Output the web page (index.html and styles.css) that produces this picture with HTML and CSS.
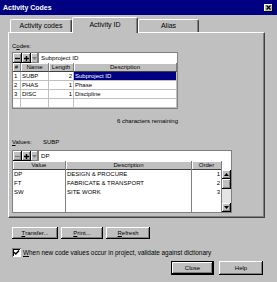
FILE: index.html
```html
<!DOCTYPE html>
<html>
<head>
<meta charset="utf-8">
<title>Activity Codes</title>
<link rel="stylesheet" href="styles.css">
</head>
<body>
<div class="window">
  <div class="titlebar">
    <span class="title">Activity Codes</span>
    <span class="xbtn"><svg width="5" height="5" viewBox="0 0 5 5"><path d="M0.5 0.5L4.5 4.5M4.5 0.5L0.5 4.5" stroke="#000" stroke-width="1.2"/></svg></span>
  </div>
  <div class="client">
    <div class="tabs">
      <div class="tab t1">Activity codes</div>
      <div class="tab t2 active">Activity ID</div>
      <div class="tab t3">Alias</div>
    </div>
    <div class="panel">
      <div class="label">C<u>o</u>des:</div>
      <div class="grid codes">
        <div class="toolbar">
          <span class="tbtn"><svg width="5" height="5" viewBox="0 0 5 5"><path d="M0 2.5H5" stroke="#000" stroke-width="1.4"/></svg></span>
          <span class="tbtn"><svg width="5" height="5" viewBox="0 0 5 5"><path d="M0 2.5H5M2.5 0V5" stroke="#000" stroke-width="1.4"/></svg></span>
          <span class="drop"><svg width="5" height="3" viewBox="0 0 5 3"><path d="M0 0H5L2.5 3Z" fill="#808080"/></svg></span>
          <span class="field">Subproject ID</span>
        </div>
        <div class="crow head"><span>#</span><span>Name</span><span>Length</span><span>Description</span></div>
        <div class="crow first"><span>1</span><span>SUBP</span><span class="num">2</span><span class="sel">Subproject ID</span></div>
        <div class="crow"><span>2</span><span>PHAS</span><span class="num">1</span><span>Phase</span></div>
        <div class="crow"><span>3</span><span>DISC</span><span class="num">1</span><span>Discipline</span></div>
        <div class="crow"><span></span><span></span><span></span><span></span></div>
      </div>
      <div class="remaining">6 characters remaining</div>
      <div class="label vlabel"><span class="vl"><u>V</u>alues:</span><span>SUBP</span></div>
      <div class="grid values">
        <div class="toolbar">
          <span class="tbtn"><svg width="5" height="5" viewBox="0 0 5 5"><path d="M0 2.5H5" stroke="#808080" stroke-width="1.4"/></svg></span>
          <span class="tbtn"><svg width="5" height="5" viewBox="0 0 5 5"><path d="M0 2.5H5M2.5 0V5" stroke="#000" stroke-width="1.4"/></svg></span>
          <span class="drop"><svg width="5" height="3" viewBox="0 0 5 3"><path d="M0 0H5L2.5 3Z" fill="#808080"/></svg></span>
          <span class="field">DP</span>
        </div>
        <div class="vbody">
          <div class="vcol c-val">
            <div class="vh">Value</div>
            <div class="vc">DP</div>
            <div class="vc">FT</div>
            <div class="vc">SW</div>
          </div>
          <div class="vcol c-desc">
            <div class="vh">Description</div>
            <div class="vc">DESIGN &amp; PROCURE</div>
            <div class="vc">FABRICATE &amp; TRANSPORT</div>
            <div class="vc">SITE WORK</div>
          </div>
          <div class="vcol c-ord">
            <div class="vh">Order</div>
            <div class="vc">1</div>
            <div class="vc">2</div>
            <div class="vc">3</div>
          </div>
          <div class="vcol c-scroll">
            <div class="vh blank"></div>
            <div class="sb">
              <div class="sbtn"><svg width="5" height="3" viewBox="0 0 5 3"><path d="M0 3H5L2.5 0Z" fill="#000"/></svg></div>
              <div class="thumb"></div>
              <div class="track"></div>
              <div class="sbtn"><svg width="5" height="3" viewBox="0 0 5 3"><path d="M0 0H5L2.5 3Z" fill="#000"/></svg></div>
            </div>
          </div>
        </div>
      </div>
    </div>
    <div class="btnrow">
      <span class="btn b-transfer"><u>T</u>ransfer...</span>
      <span class="btn b-print"><u>P</u>rint...</span>
      <span class="btn b-refresh"><u>R</u>efresh</span>
    </div>
    <div class="check">
      <span class="cbox"><svg width="7" height="7" viewBox="0 0 7 7"><path d="M1 3.2L2.8 5L6 1.5" stroke="#000" stroke-width="1.5" fill="none"/></svg></span>
      <span class="clabel"><u>W</u>hen new code values occur in project, validate against dictionary</span>
    </div>
    <div class="btnrow bottom">
      <span class="btn b-close">Close</span>
      <span class="btn b-help">Help</span>
    </div>
  </div>
</div>
</body>
</html>
```
FILE: styles.css
```css
* { box-sizing: border-box; }
html, body { margin: 0; padding: 0; }
body {
  width: 277px;
  height: 282px;
  overflow: hidden;
  background: #c0c0c0;
  font-family: "Liberation Sans", Arial, sans-serif;
  font-size: 6px;
  line-height: 8px;
  color: #000;
}
u { text-decoration: underline; text-underline-offset: 1px; }
svg { display: block; }

.titlebar {
  height: 15px;
  background: #000080;
  display: flex;
  align-items: center;
  justify-content: space-between;
  padding: 0 4px 0 3px;
}
.title { color: #fff; font-weight: bold; font-size: 7px; }
.xbtn {
  width: 9px; height: 8px;
  background: #c0c0c0;
  box-shadow: inset -1px -1px #000, inset 1px 1px #fff;
  display: flex; align-items: center; justify-content: center;
}

.client { padding: 2px 0 0 8px; }

.tabs { display: flex; align-items: flex-end; height: 15px; margin-left: 2px; }
.tab {
  height: 13px;
  display: flex; align-items: center; justify-content: center;
  font-size: 7px;
  background: #c0c0c0;
  border-top: 1px solid #fff;
  border-left: 1px solid #fff;
  border-right: 1px solid #404040;
  box-shadow: inset -1px 0 #808080;
  border-radius: 2px 2px 0 0;
}
.t1 { width: 62px; }
.t2 { width: 66px; }
.t3 { width: 61px; }
.tab.active { height: 16px; margin-bottom: -1px; position: relative; z-index: 1; padding-bottom: 2px; }

.panel {
  width: 257px;
  height: 186px;
  border-top: 1px solid #fff;
  border-left: 1px solid #fff;
  border-right: 1px solid #404040;
  border-bottom: 1px solid #404040;
  box-shadow: inset -1px -1px #808080;
  padding: 9px 0 0 3px;
}
.label { height: 8px; }
.grid { background: #fff; border: 1px solid #808080; margin-top: 2px; }
.codes { width: 166px; }
.values { width: 220px; margin-top: 4px; }

.toolbar { display: flex; height: 10px; background: #c0c0c0; }
.tbtn {
  width: 9px; height: 10px;
  background: #c0c0c0;
  box-shadow: inset -1px -1px #000, inset 1px 1px #fff, inset -2px -2px #808080;
  display: flex; align-items: center; justify-content: center;
}
.drop {
  width: 7px; height: 10px;
  box-shadow: inset -1px -1px #808080, inset 1px 1px #fff;
  display: flex; align-items: center; justify-content: center;
}
.field {
  flex: 1;
  background: #fff;
  padding-left: 2px;
  line-height: 10px;
  font-size: 6.2px;
  border-left: 1px solid #808080;
}

.crow { display: grid; grid-template-columns: 8px 28px 25px 1fr; height: 9px; }
.crow > span {
  line-height: 8px;
  padding-left: 1px;
  border-right: 1px solid #c0c0c0;
  border-bottom: 1px solid #c0c0c0;
  white-space: nowrap;
  overflow: hidden;
}
.crow.head > span {
  background: #c0c0c0;
  text-align: center;
  padding-left: 0;
  border-right: 1px solid #808080;
  border-bottom: 1px solid #404040;
  box-shadow: inset 1px 1px #fff;
}
.crow > .num { text-align: right; padding-right: 1px; }
.crow > .sel { background: #000080; color: #fff; }
.crow.first > span { border-top: 0; }

.remaining { margin-top: 8px; padding-left: 105px; height: 8px; }
.vlabel { margin-top: 13px; display: flex; }
.vl { width: 31px; }

.vbody { display: flex; height: 51px; }
.vcol { border-right: 1px solid #808080; }
.c-val { width: 53px; }
.c-desc { width: 126px; }
.c-ord { width: 30px; text-align: right; }
.c-scroll { width: 9px; border-right: 0; }
.vh {
  height: 9px;
  line-height: 8px;
  background: #c0c0c0;
  text-align: center;
  border-bottom: 1px solid #404040;
  box-shadow: inset 1px 1px #fff;
}
.vh.blank { background: #fff; box-shadow: none; border-bottom: 0; }
.vc { height: 9px; line-height: 9px; padding-left: 1px; white-space: nowrap; }
.c-ord .vc { padding: 0 1px 0 0; }

.sb { display: flex; flex-direction: column; height: 42px; }
.sbtn {
  height: 9px;
  background: #c0c0c0;
  box-shadow: inset -1px -1px #000, inset 1px 1px #fff, inset -2px -2px #808080;
  display: flex; align-items: center; justify-content: center;
}
.thumb {
  height: 10px;
  background: #c0c0c0;
  box-shadow: inset -1px -1px #000, inset 1px 1px #fff, inset -2px -2px #808080;
}
.track { flex: 1; background: #e4e4e4; }

.btnrow { display: flex; gap: 3px; margin-top: 9px; padding-left: 4px; }
.btn {
  height: 12px;
  display: flex; align-items: center; justify-content: center;
  background: #c0c0c0;
  box-shadow: inset -1px -1px #000, inset 1px 1px #fff, inset -2px -2px #808080;
}
.b-transfer { width: 46px; }
.b-print { width: 42px; }
.b-refresh { width: 44px; }

.check { display: flex; align-items: center; gap: 2px; margin-top: 9px; padding-left: 4px; height: 9px; }
.cbox {
  width: 9px; height: 9px;
  background: #fff;
  box-shadow: inset 1px 1px #808080, inset -1px -1px #fff, inset 2px 2px #000;
  display: flex; align-items: center; justify-content: center;
}
.clabel { font-size: 6.4px; white-space: nowrap; }

.btnrow.bottom { width: 257px; justify-content: flex-end; gap: 5px; margin-top: 4px; padding: 0 2px 0 0; }
.bottom .btn { height: 14px; }
.b-close { width: 43px; border: 1px solid #000; }
.b-help { width: 44px; }
```
